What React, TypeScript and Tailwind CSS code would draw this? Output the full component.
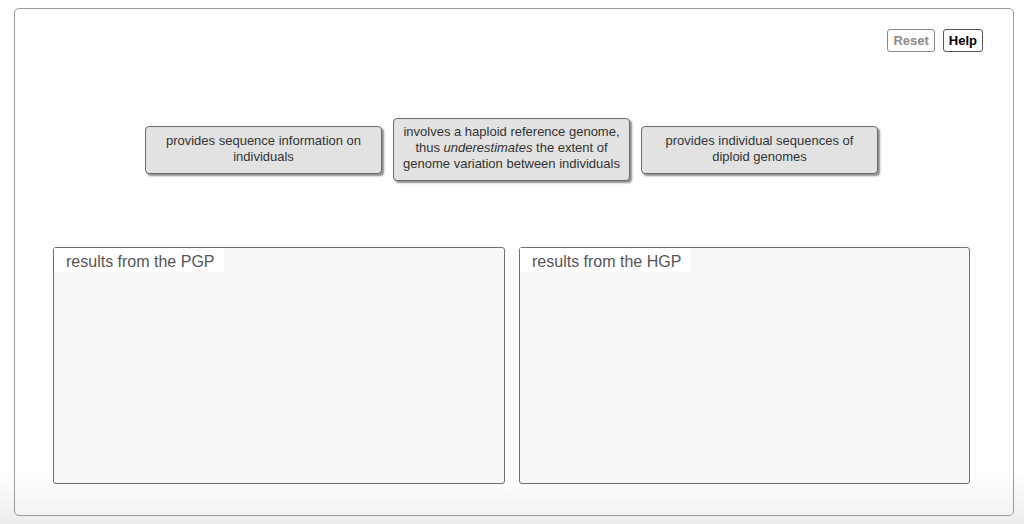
import React from "react";

const font = { fontFamily: '"Liberation Sans", Arial, sans-serif' };

function Card({ children, className = "" }: { children: React.ReactNode; className?: string }) {
  return (
    <div
      className={`w-[237px] flex items-center justify-center rounded-[4px] border border-[#6b6b6b] bg-[#e2e2e2] text-center text-[13px] leading-[16px] text-[#333] shadow-[2px_2px_2px_rgba(0,0,0,0.45)] ${className}`}
    >
      {children}
    </div>
  );
}

function Zone({ label, className = "" }: { label: string; className?: string }) {
  return (
    <div className={`h-[237px] rounded-[3px] border border-[#6e6e6e] bg-[#f7f7f7] ${className}`}>
      <div className="inline-block bg-white pl-[12px] pr-[9px] pt-[5px] pb-[1px] text-[16px] leading-[18px] text-[#555]">
        {label}
      </div>
    </div>
  );
}

export default function App() {
  return (
    <div style={font} className="w-[1024px] h-[524px] bg-gradient-to-b from-white from-[90%] to-[#ececec] pt-[8px] pl-[14px]">
      <div className="w-[1000px] h-[508px] rounded-[5px] border border-[#9a9a9a] bg-gradient-to-b from-white from-[92%] to-[#f2f2f2] flex flex-col">
        <div className="flex justify-end gap-[8px] pt-[20px] pr-[30px]">
          <button className="h-[23px] px-[5px] rounded-[3px] border border-[#888] bg-white text-[13px] font-bold text-[#8a8a8a]">
            Reset
          </button>
          <button className="h-[23px] px-[5px] rounded-[3px] border border-[#555] bg-white text-[13px] font-bold text-black">
            Help
          </button>
        </div>
        <div className="flex items-center gap-[11px] pl-[130px] mt-[66px]">
          <Card className="h-[48px] pb-[2px]">
            provides sequence information on
            <br />
            individuals
          </Card>
          <Card className="h-[63px] pb-[3px]">
            <span>
              involves a haploid reference genome,
              <br />
              thus <i>underestimates</i> the extent of
              <br />
              genome variation between individuals
            </span>
          </Card>
          <Card className="h-[48px] pb-[2px]">
            provides individual sequences of
            <br />
            diploid genomes
          </Card>
        </div>
        <div className="flex gap-[14px] pl-[38px] mt-[66px]">
          <Zone label="results from the PGP" className="w-[452px]" />
          <Zone label="results from the HGP" className="w-[451px]" />
        </div>
      </div>
    </div>
  );
}
